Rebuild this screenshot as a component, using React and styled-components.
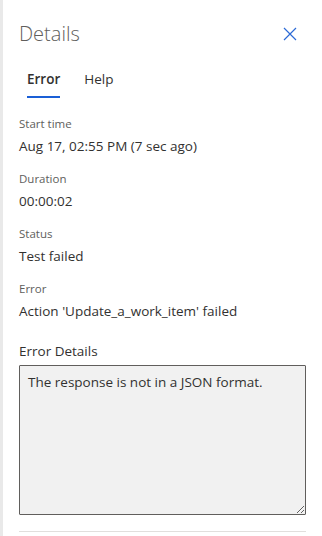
import React from "react";
import styled, { createGlobalStyle } from "styled-components";

const Global = createGlobalStyle`
  html, body { margin: 0; padding: 0; background: #fff; }
  body { font-family: "Segoe UI", "Open Sans", sans-serif; color: #323130; }
  * { box-sizing: border-box; }
`;

const Page = styled.div`
  display: flex;
  width: 322px;
  height: 536px;
  overflow: hidden;
`;

const Edge = styled.div`
  width: 3px;
  flex: none;
  background: #e9e9e9;
`;

const Panel = styled.div`
  flex: 1;
  padding: 0 16px 0 16px;
  display: flex;
  flex-direction: column;
`;

const Header = styled.div`
  display: flex;
  align-items: center;
  justify-content: space-between;
  height: 66px;
  padding-top: 1px;
`;

const Title = styled.h1`
  margin: 0;
  font-size: 20px;
  font-weight: 300;
  color: #605e5c;
`;

const Close = styled.button`
  border: 0;
  background: none;
  padding: 0;
  margin-right: 8px;
  width: 16px;
  height: 16px;
  display: flex;
  align-items: center;
  justify-content: center;
  cursor: pointer;
`;

const Tabs = styled.div`
  display: flex;
  gap: 24px;
  padding-left: 8px;
  height: 32px;
`;

const Tab = styled.div`
  font-size: 13.5px;
  font-weight: ${(p) => (p.$active ? 600 : 400)};
  color: #323130;
  position: relative;
  padding-top: 4px;
  &::after {
    content: "";
    display: ${(p) => (p.$active ? "block" : "none")};
    position: absolute;
    left: 0;
    right: 0;
    bottom: 0;
    height: 2px;
    background: #1a5fd6;
  }
`;

const Fields = styled.div`
  display: flex;
  flex-direction: column;
  gap: 15px;
  margin-top: 18px;
`;

const Field = styled.div`
  display: flex;
  flex-direction: column;
  gap: 4px;
`;

const Label = styled.div`
  font-size: 11.5px;
  color: #605e5c;
  line-height: 16px;
`;

const Value = styled.div`
  font-size: 13.5px;
  color: #323130;
  line-height: 20px;
`;

const DetailsLabel = styled.div`
  font-size: 13.5px;
  color: #323130;
  margin-top: 20px;
  line-height: 20px;
`;

const Box = styled.textarea`
  margin-top: 4px;
  width: 287px;
  height: 150px;
  background: #f1f1f1;
  border: 1px solid #605e5c;
  border-radius: 1px;
  padding: 6px 8px;
  font-family: inherit;
  font-size: 13.5px;
  color: #323130;
  line-height: 20px;
  resize: vertical;
  outline: none;
`;

const Divider = styled.div`
  margin-top: 16px;
  width: 287px;
  height: 1px;
  background: #e1dfdd;
`;

const fields = [
  ["Start time", "Aug 17, 02:55 PM (7 sec ago)"],
  ["Duration", "00:00:02"],
  ["Status", "Test failed"],
  ["Error", "Action 'Update_a_work_item' failed"],
];

export default function App() {
  return (
    <Page>
      <Global />
      <Edge />
      <Panel>
        <Header>
          <Title>Details</Title>
          <Close aria-label="Close">
            <svg width="14" height="14" viewBox="0 0 14 14">
              <path d="M1 1L13 13M13 1L1 13" stroke="#2c6ad6" strokeWidth="1.2" fill="none" />
            </svg>
          </Close>
        </Header>
        <Tabs>
          <Tab $active>Error</Tab>
          <Tab>Help</Tab>
        </Tabs>
        <Fields>
          {fields.map(([l, v]) => (
            <Field key={l}>
              <Label>{l}</Label>
              <Value>{v}</Value>
            </Field>
          ))}
        </Fields>
        <DetailsLabel>Error Details</DetailsLabel>
        <Box readOnly value="The response is not in a JSON format." />
        <Divider />
      </Panel>
    </Page>
  );
}
